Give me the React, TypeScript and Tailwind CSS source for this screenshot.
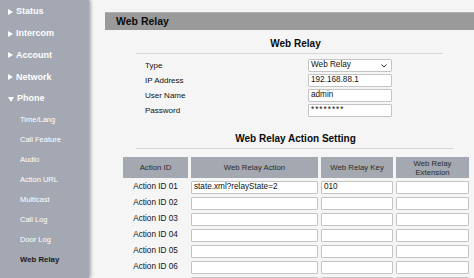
import React from "react";

const topItems = ["Status", "Intercom", "Account", "Network"];
const subItems = ["Time/Lang", "Call Feature", "Audio", "Action URL", "Multicast", "Call Log", "Door Log"];

function RightTri() {
  return (
    <svg width="5" height="6" viewBox="0 0 5 6" className="mr-[3px] shrink-0">
      <path d="M0 0 L5 3 L0 6 Z" fill="#ffffff" />
    </svg>
  );
}
function DownTri() {
  return (
    <svg width="6" height="5" viewBox="0 0 6 5" className="mr-[3px] shrink-0">
      <path d="M0 0 L6 0 L3 5 Z" fill="#ffffff" />
    </svg>
  );
}

function Input({ value = "", gray = false, className = "" }: { value?: string; gray?: boolean; className?: string }) {
  return (
    <div
      className={`h-[13px] border border-[#c4c4c4] rounded-[1px] px-[2px] flex items-center text-[8.2px] text-[#111] whitespace-nowrap overflow-hidden ${gray ? "bg-[#b4b4b4]" : "bg-white"} ${className}`}
    >
      {value}
    </div>
  );
}

export default function App() {
  const rows = [
    { id: "01", action: "state.xml?relayState=2", key: "010" },
    { id: "02", action: "", key: "" },
    { id: "03", action: "", key: "" },
    { id: "04", action: "", key: "" },
    { id: "05", action: "", key: "" },
    { id: "06", action: "", key: "" },
  ];
  return (
    <div
      className="w-[474px] h-[278px] overflow-hidden flex bg-[#f5f5f5]"
      style={{ fontFamily: '"Liberation Sans", Arial, sans-serif' }}
    >
      {/* Sidebar */}
      <div className="w-[89px] shrink-0 h-full bg-[#a3a8b2] relative z-10 shadow-[2px_0_3px_rgba(0,0,0,0.3)] pt-[1px]">
        {topItems.map((t) => (
          <div key={t} className="h-[21.8px] flex items-center pl-[8px] text-white font-bold text-[9px]">
            <RightTri />
            {t}
          </div>
        ))}
        <div className="h-[21.8px] flex items-center pl-[8px] text-white font-bold text-[9px]">
          <DownTri />
          Phone
        </div>
        {subItems.map((t) => (
          <div key={t} className="h-[20px] flex items-center pl-[20px] text-white text-[7.5px]">
            {t}
          </div>
        ))}
        <div className="h-[20px] flex items-center pl-[20px] text-[#1a1a1a] font-bold text-[7.8px]">Web Relay</div>
      </div>

      {/* Main */}
      <div className="flex-1 h-full pt-[12px]">
        <div className="ml-[16px] h-[18px] bg-[#9a9a9a] border-t border-[#b0b0b0] flex items-center pl-[11px] text-[10.5px] font-bold text-[#0a0a0a]">
          Web Relay
        </div>

        <div className="ml-[47px] w-[319px] mt-[3px] h-[20px] flex items-center justify-center text-[10px] font-bold text-[#0a0a0a]">
          Web Relay
        </div>
        <div className="ml-[47px] w-[307px] h-[1px] bg-[#d6d6d6]" />

        <div className="mt-[4px]">
          {[
            ["Type", "select"],
            ["IP Address", "192.168.88.1"],
            ["User Name", "admin"],
            ["Password", "pw"],
          ].map(([label, v]) => (
            <div key={label} className="h-[15px] flex items-center">
              <div className="ml-[56px] w-[163px] text-[8px] text-[#111]">{label}</div>
              {v === "select" ? (
                <div className="w-[84px] h-[13px] border border-[#c4c4c4] rounded-[2px] bg-white flex items-center justify-between px-[2px] text-[8.2px] text-[#111]">
                  <span>Web Relay</span>
                  <svg width="6" height="4" viewBox="0 0 6 4" className="mr-[2px]">
                    <path d="M0.5 0.5 L3 3 L5.5 0.5" fill="none" stroke="#333" strokeWidth="1" />
                  </svg>
                </div>
              ) : v === "pw" ? (
                <Input value="********" className="w-[84px] tracking-[1px]" />
              ) : (
                <Input value={v} className="w-[84px]" />
              )}
            </div>
          ))}
        </div>

        <div className="ml-[47px] w-[319px] mt-[10px] h-[20px] flex items-center justify-center text-[10px] font-bold text-[#0a0a0a]">
          Web Relay Action Setting
        </div>
        <div className="ml-[47px] w-[317px] h-[1px] bg-[#d6d6d6]" />

        <div className="ml-[34px] mt-[8px] grid grid-cols-[65px_127px_72px_73px] gap-x-[3px] gap-y-[3px]">
          {["Action ID", "Web Relay Action", "Web Relay Key"].map((h) => (
            <div key={h} className="h-[21px] bg-[#a4a8b0] flex items-center justify-center text-[7.8px] text-[#2a2a2a]">
              {h}
            </div>
          ))}
          <div className="h-[21px] bg-[#a4a8b0] flex flex-col items-center justify-center text-[7.8px] leading-[9px] text-[#2a2a2a] text-center">
            <span>Web Relay</span>
            <span>Extension</span>
          </div>
          {rows.map((r) => (
            <React.Fragment key={r.id}>
              <div className="h-[13px] flex items-center justify-center text-[8.2px] text-[#111]">Action ID {r.id}</div>
              <Input value={r.action} />
              <Input value={r.key} />
              <Input />
            </React.Fragment>
          ))}
          <div className="h-[13px]" />
          <Input gray />
          <Input gray />
          <Input gray />
        </div>
      </div>
    </div>
  );
}
